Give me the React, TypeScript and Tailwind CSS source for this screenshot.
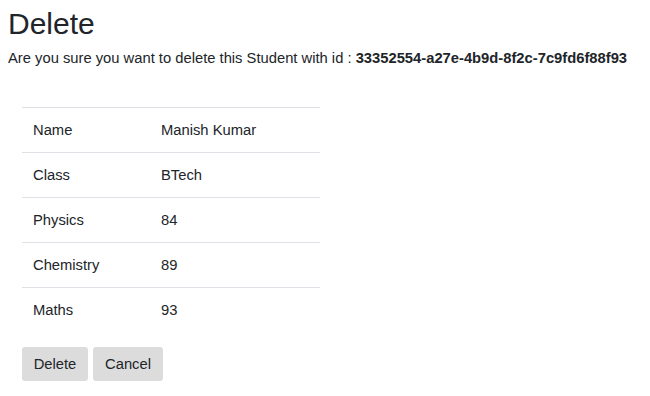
import React from "react";

const rows: [string, string][] = [
  ["Name", "Manish Kumar"],
  ["Class", "BTech"],
  ["Physics", "84"],
  ["Chemistry", "89"],
  ["Maths", "93"],
];

export default function App() {
  return (
    <div className="w-[650px] h-[396px] bg-white text-[#212529] px-2 pt-[6px] text-[14.75px]" style={{ fontFamily: '"Liberation Sans", Arial, sans-serif' }}>
      <h1 className="text-[30px] leading-[36px] font-normal">Delete</h1>
      <p className="leading-[20px] mt-[6px]">
        Are you sure you want to delete this Student with id : <b>33352554-a27e-4b9d-8f2c-7c9fd6f88f93</b>
      </p>
      <div className="ml-[14px] mt-[39px] w-[298px]">
        {rows.map(([k, v]) => (
          <div key={k} className="grid grid-cols-[128px_1fr] h-[45px] items-center border-t border-[#dee2e6] pl-[11px]">
            <span>{k}</span>
            <span>{v}</span>
          </div>
        ))}
      </div>
      <div className="ml-[14px] mt-[15px] flex gap-[5px]">
        <button className="h-[34px] w-[66px] rounded-[3px] bg-[#dcdcdc]">Delete</button>
        <button className="h-[34px] w-[70px] rounded-[3px] bg-[#dcdcdc]">Cancel</button>
      </div>
    </div>
  );
}
